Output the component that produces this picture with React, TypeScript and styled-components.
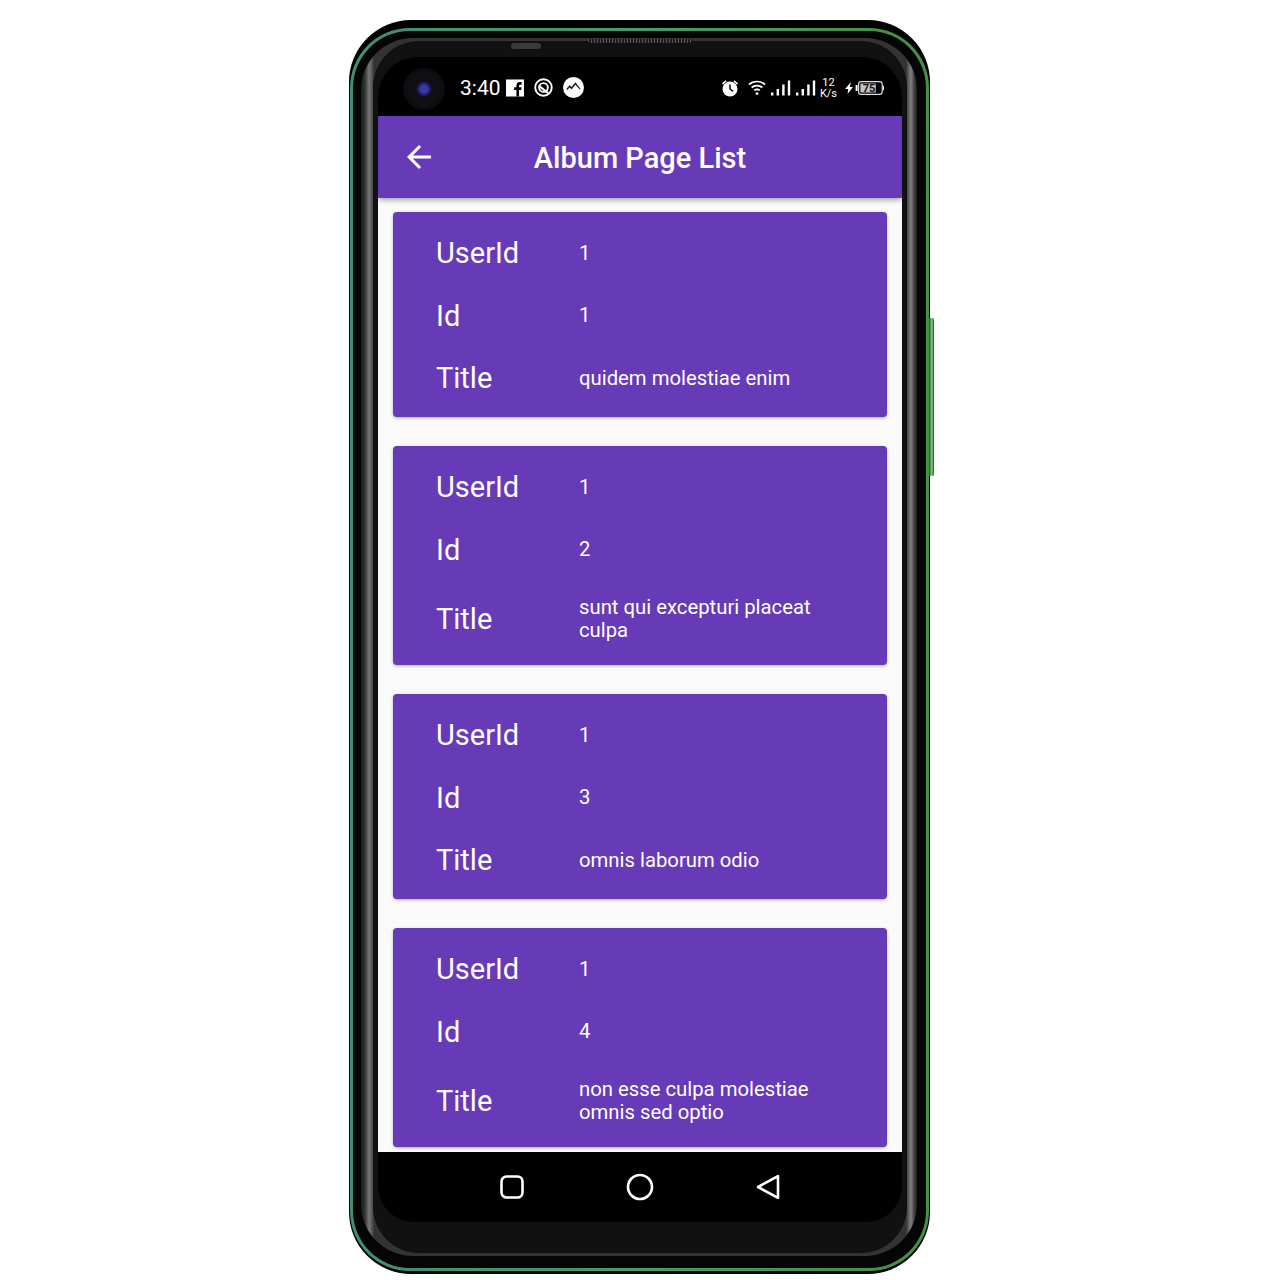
import React from 'react'
import styled, { createGlobalStyle } from 'styled-components'
import { MdArrowBack } from 'react-icons/md'

interface Album {
  readonly userId: number
  readonly id: number
  readonly title: string
}

const albums: Album[] = [
  { userId: 1, id: 1, title: 'quidem molestiae enim' },
  { userId: 1, id: 2, title: 'sunt qui excepturi placeat culpa' },
  { userId: 1, id: 3, title: 'omnis laborum odio' },
  { userId: 1, id: 4, title: 'non esse culpa molestiae omnis sed optio' }
]

const GlobalStyle = createGlobalStyle`
  html, body {
    background: #fff;
    margin: 0;
    padding: 0;
  }
  body {
    font-family: Roboto, "Liberation Sans", sans-serif;
  }
`

const Page = styled.div`
  box-sizing: border-box;
  height: 1280px;
  overflow: hidden;
  padding: 20px 0 0 349px;
`

const Device = styled.div`
  background: #000;
  border-radius: 62px;
  box-sizing: border-box;
  height: 1254px;
  padding: 8px 1px 2px 1px;
  position: relative;
  width: 581px;
`

const SideButton = styled.div`
  background: linear-gradient(90deg, #14501c, #6fd06f 50%, #1d6a26);
  border-radius: 0 2px 2px 0;
  height: 158px;
  position: absolute;
  right: -4px;
  top: 298px;
  width: 5px;
`

const Earpiece = styled.div`
  background: #3a3a3a;
  border-radius: 3px;
  height: 6px;
  left: 162px;
  position: absolute;
  top: 23px;
  width: 30px;
`

const Speaker = styled.div`
  background: repeating-linear-gradient(90deg, #555 0 1px, #1c1c1c 1px 3px);
  border-radius: 0 0 3px 3px;
  height: 4px;
  left: 239px;
  position: absolute;
  top: 19px;
  width: 104px;
`

const GreenRing = styled.div`
  background: linear-gradient(90deg, #3f8f72, #4a9a6c 50%, #468f46);
  border-radius: 60px;
  padding: 3px;
`

const BlackBand = styled.div`
  background: #050505;
  border-radius: 57px;
  padding: 7px 9px 12px 8px;
`

const SteelRing = styled.div`
  background: linear-gradient(
    90deg,
    #1c1c1c 0,
    #333 4px,
    #777 8px,
    #555 11px,
    #333 13px,
    #333 calc(100% - 11px),
    #666 calc(100% - 8px),
    #808080 calc(100% - 6px),
    #444 calc(100% - 3px),
    #1c1c1c 100%
  );
  border-radius: 52px;
  padding: 3px 10px 3px 12px;
`

const Glass = styled.div`
  background: #111;
  border-radius: 46px;
  padding: 16px 5px 31px 5px;
`

const Display = styled.div`
  background: #000;
  border-radius: 40px 40px 36px 36px;
  display: flex;
  flex-direction: column;
  height: 1165px;
  overflow: hidden;
`

const StatusBar = styled.div`
  align-items: center;
  box-sizing: border-box;
  color: #fff;
  display: flex;
  flex: 0 0 59px;
  padding: 2px 18px 0 25px;
`

const Camera = styled.div`
  align-items: center;
  background: radial-gradient(circle, #101014 0 45%, #0c0c0e 70%, #040404 100%);
  border-radius: 50%;
  display: flex;
  height: 42px;
  justify-content: center;
  margin-right: 15px;
  margin-top: 3px;
  width: 42px;
`

const Lens = styled.div`
  background: radial-gradient(circle, #3a39a8 0 30%, #1c1a66 65%, #0b0b20 100%);
  border-radius: 50%;
  height: 14px;
  width: 14px;
`

const Clock = styled.span`
  font-size: 21px;
  margin-right: 5px;
`

const IconGroup = styled.div<{ $gap: number }>`
  align-items: center;
  display: flex;
  gap: ${props => props.$gap}px;
`

const Spacer = styled.div`
  flex: 1;
`

const Speed = styled.div`
  font-size: 11px;
  line-height: 11px;
  margin: 0 8px 0 4px;
  text-align: center;
`

const AppBar = styled.header`
  align-items: center;
  background: #673ab7;
  box-shadow: 0 2px 5px rgba(0, 0, 0, 0.35);
  color: #fff;
  display: grid;
  flex: 0 0 82px;
  grid-template-columns: 1fr auto 1fr;
  padding-left: 23px;
  padding-right: 23px;
  position: relative;
  z-index: 1;
  & > svg {
    font-size: 36px;
  }
`

const AppBarTitle = styled.h1`
  font-size: 29px;
  font-weight: 500;
  margin: 2px 0 0 0;
`

const List = styled.main`
  background: #fafafa;
  box-sizing: border-box;
  display: flex;
  flex: 0 0 954px;
  flex-direction: column;
  gap: 29px;
  overflow: hidden;
  padding: 14px 15px 0 15px;
`

const Card = styled.article`
  background: #673ab7;
  border-radius: 4px;
  box-shadow: 0 1px 3px rgba(0, 0, 0, 0.3);
  color: #fff;
  padding: 9.75px 0 8px 43px;
`

const Row = styled.div`
  align-items: center;
  box-sizing: border-box;
  display: grid;
  grid-template-columns: 143px 250px;
  min-height: 62.5px;
  padding: 15px 0;
`

const Label = styled.span`
  font-size: 29px;
  line-height: 32px;
`

const Value = styled.span`
  font-size: 20.3px;
  line-height: 23px;
`

const NavBar = styled.nav`
  align-items: center;
  display: grid;
  flex: 0 0 70px;
  grid-template-columns: repeat(3, 128px);
  justify-content: center;
  justify-items: center;
`

const FacebookIcon = () => (
  <svg width="18" height="18" viewBox="0 0 19 18">
    <rect width="19" height="18" fill="#fff" />
    <path
      d="M11 18v-7H8.6V8.2H11V6.3C11 3.9 12.4 2.7 14.5 2.7h2v2.8h-1.3c-1 0-1.4.5-1.4 1.3v1.4h2.6l-.4 2.8h-2.2v7z"
      fill="#000"
    />
  </svg>
)

const QuickIcon = () => (
  <svg width="19" height="19" viewBox="0 0 20 20" fill="none" stroke="#fff">
    <circle cx="10" cy="10" r="8.7" strokeWidth="2" />
    <circle cx="10" cy="10" r="4.6" strokeWidth="2" />
    <path d="M5 8l10 8" strokeWidth="2.2" />
  </svg>
)

const PeaksIcon = () => (
  <svg width="21" height="21" viewBox="0 0 22 22">
    <circle cx="11" cy="11" r="11" fill="#fff" />
    <path
      d="M3.5 12.5L7 8.5l2 2 4-5 5.5 7-1 .5-4.5-5-4 5-2-2-2.5 2.5z"
      fill="#222"
    />
  </svg>
)

const AlarmIcon = () => (
  <svg width="18" height="18" viewBox="0 0 18 18">
    <circle cx="9" cy="10" r="7.5" fill="#fff" />
    <path d="M1 4.5L4.5 1.2 5.6 2.3 2 5.7zM17 4.5L13.5 1.2 12.4 2.3 16 5.7z" fill="#fff" />
    <path d="M9 5.5V10l3.2 2.5" fill="none" stroke="#000" strokeWidth="1.5" />
  </svg>
)

const WifiIcon = () => (
  <svg width="18" height="17" viewBox="0 0 18 17" fill="none" stroke="#fff" strokeWidth="1.7">
    <path d="M1 5.5C5.5 1.5 12.5 1.5 17 5.5" />
    <path d="M3.6 8.5C6.6 5.9 11.4 5.9 14.4 8.5" />
    <path d="M6.2 11.4C7.8 10.1 10.2 10.1 11.8 11.4" />
    <circle cx="9" cy="14.6" r="1.4" fill="#fff" stroke="none" />
  </svg>
)

const SignalIcon = () => (
  <svg width="20" height="16" viewBox="0 0 20 16" fill="#fff">
    <rect x="0" y="12.5" width="2.4" height="3" />
    <rect x="5.6" y="9" width="2.4" height="6.5" />
    <rect x="11.2" y="4.5" width="2.4" height="11" />
    <rect x="16.8" y="0.5" width="2.4" height="15" />
  </svg>
)

const BoltIcon = () => (
  <svg width="13" height="12" viewBox="0 0 13 12" fill="#fff">
    <path d="M6 0L0 7h3.2L2.6 12 8 5H4.8z" />
    <rect x="10.6" y="3" width="2" height="6" />
  </svg>
)

const BatteryIcon = () => (
  <svg width="26" height="14" viewBox="0 0 26 14">
    <rect x="0.6" y="0.6" width="23.6" height="12.8" rx="2.4" fill="none" stroke="#ddd" strokeWidth="1.2" />
    <rect x="2.4" y="2.4" width="15.4" height="9.2" rx="1" fill="#c4c4c4" />
    <rect x="24.6" y="4.6" width="1.4" height="4.8" fill="#ddd" />
    <text x="11" y="11" fontSize="11" fontWeight="700" textAnchor="middle" fill="#111" fontFamily="Roboto, sans-serif">
      75
    </text>
  </svg>
)

const RecentsIcon = () => (
  <svg width="24" height="24" viewBox="0 0 24 24" fill="none" stroke="#fff" strokeWidth="2.6">
    <rect x="1.5" y="1.5" width="21" height="21" rx="5" />
  </svg>
)

const HomeIcon = () => (
  <svg width="28" height="28" viewBox="0 0 28 28" fill="none" stroke="#fff" strokeWidth="2.6">
    <circle cx="14" cy="14" r="12" />
  </svg>
)

const BackIcon = () => (
  <svg width="24" height="26" viewBox="0 0 24 26" fill="none" stroke="#fff" strokeWidth="2.6" strokeLinejoin="round">
    <path d="M22 2.2V23.8L2 13z" />
  </svg>
)

const AlbumCard: React.FC<{ album: Album }> = ({ album }) => (
  <Card>
    <Row>
      <Label>UserId</Label>
      <Value>{album.userId}</Value>
    </Row>
    <Row>
      <Label>Id</Label>
      <Value>{album.id}</Value>
    </Row>
    <Row>
      <Label>Title</Label>
      <Value>{album.title}</Value>
    </Row>
  </Card>
)

const App: React.FC = () => (
  <Page>
    <GlobalStyle />
    <Device>
      <SideButton />
      <Earpiece />
      <Speaker />
      <GreenRing>
        <BlackBand>
          <SteelRing>
            <Glass>
              <Display>
                <StatusBar>
                  <Camera>
                    <Lens />
                  </Camera>
                  <Clock>3:40</Clock>
                  <IconGroup $gap={10}>
                    <FacebookIcon />
                    <QuickIcon />
                    <PeaksIcon />
                  </IconGroup>
                  <Spacer />
                  <IconGroup $gap={9}>
                    <AlarmIcon />
                    <WifiIcon />
                  </IconGroup>
                  <IconGroup $gap={5}>
                    <span />
                    <SignalIcon />
                    <SignalIcon />
                  </IconGroup>
                  <Speed>
                    12
                    <br />
                    K/s
                  </Speed>
                  <BoltIcon />
                  <BatteryIcon />
                </StatusBar>
                <AppBar>
                  <MdArrowBack />
                  <AppBarTitle>Album Page List</AppBarTitle>
                </AppBar>
                <List>
                  {albums.map(album => (
                    <AlbumCard key={album.id} album={album} />
                  ))}
                </List>
                <NavBar>
                  <RecentsIcon />
                  <HomeIcon />
                  <BackIcon />
                </NavBar>
              </Display>
            </Glass>
          </SteelRing>
        </BlackBand>
      </GreenRing>
    </Device>
  </Page>
)

export default App
